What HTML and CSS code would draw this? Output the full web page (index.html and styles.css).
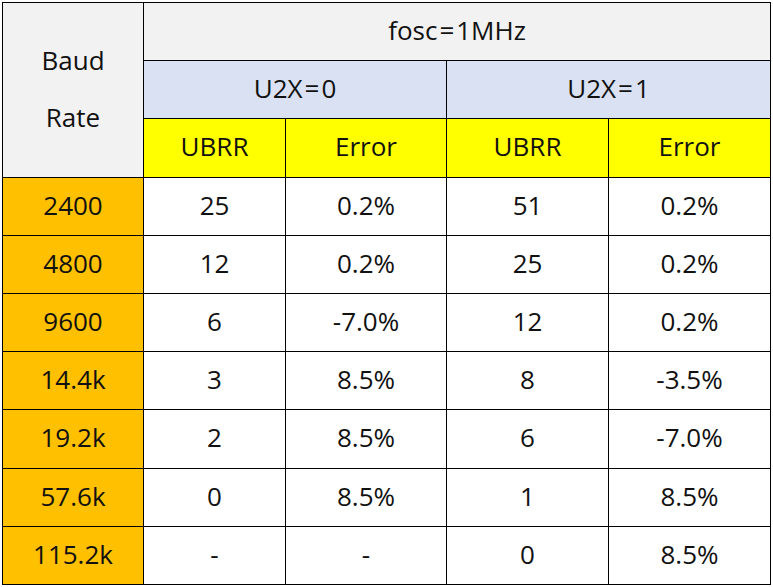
FILE: index.html
```html
<!DOCTYPE html>
<html>
<head>
<meta charset="utf-8">
<link rel="stylesheet" href="styles.css">
</head>
<body>
<div class="table">
  <div class="cell gray baud">Baud<br>Rate</div>
  <div class="cell gray fosc">fosc<span class="eq">=</span>1MHz</div>
  <div class="cell blue u2x0">U2X<span class="eq">=</span>0</div>
  <div class="cell blue u2x1">U2X<span class="eq">=</span>1</div>
  <div class="cell yellow">UBRR</div>
  <div class="cell yellow">Error</div>
  <div class="cell yellow">UBRR</div>
  <div class="cell yellow">Error</div>

  <div class="cell orange">2400</div><div class="cell">25</div><div class="cell">0.2%</div><div class="cell">51</div><div class="cell">0.2%</div>
  <div class="cell orange">4800</div><div class="cell">12</div><div class="cell">0.2%</div><div class="cell">25</div><div class="cell">0.2%</div>
  <div class="cell orange">9600</div><div class="cell">6</div><div class="cell">-7.0%</div><div class="cell">12</div><div class="cell">0.2%</div>
  <div class="cell orange">14.4k</div><div class="cell">3</div><div class="cell">8.5%</div><div class="cell">8</div><div class="cell">-3.5%</div>
  <div class="cell orange">19.2k</div><div class="cell">2</div><div class="cell">8.5%</div><div class="cell">6</div><div class="cell">-7.0%</div>
  <div class="cell orange">57.6k</div><div class="cell">0</div><div class="cell">8.5%</div><div class="cell">1</div><div class="cell">8.5%</div>
  <div class="cell orange">115.2k</div><div class="cell">-</div><div class="cell">-</div><div class="cell">0</div><div class="cell">8.5%</div>
</div>
</body>
</html>
```
FILE: styles.css
```css
html, body {
  margin: 0;
  padding: 0;
  background: #ffffff;
}
body {
  padding: 2px 0 0 2px;
}
.table {
  display: grid;
  grid-template-columns: 140px 141px 160px 161px 161px;
  grid-template-rows: 57px 57px 58px 57px 57px 57px 57px 58px 57px 57px;
  gap: 1px;
  padding: 1px;
  background: #000000;
  width: max-content;
  font-family: "Open Sans", "Noto Sans CJK KR", sans-serif;
  font-size: 26px;
  color: #111111;
}
.cell {
  background: #ffffff;
  display: flex;
  align-items: center;
  justify-content: center;
  text-align: center;
  line-height: 1;
  padding-bottom: 4px;
  box-sizing: border-box;
}
.eq {
  margin: 0 2px;
}
.gray { background: #f2f2f2; }
.blue { background: #d9e1f2; }
.yellow { background: #ffff00; }
.orange { background: #ffc000; }
.baud {
  grid-row: 1 / span 3;
  line-height: 57px;
  padding-bottom: 3px;
}
.fosc { grid-column: 2 / span 4; }
.u2x0 { grid-column: 2 / span 2; }
.u2x1 { grid-column: 4 / span 2; }
```
